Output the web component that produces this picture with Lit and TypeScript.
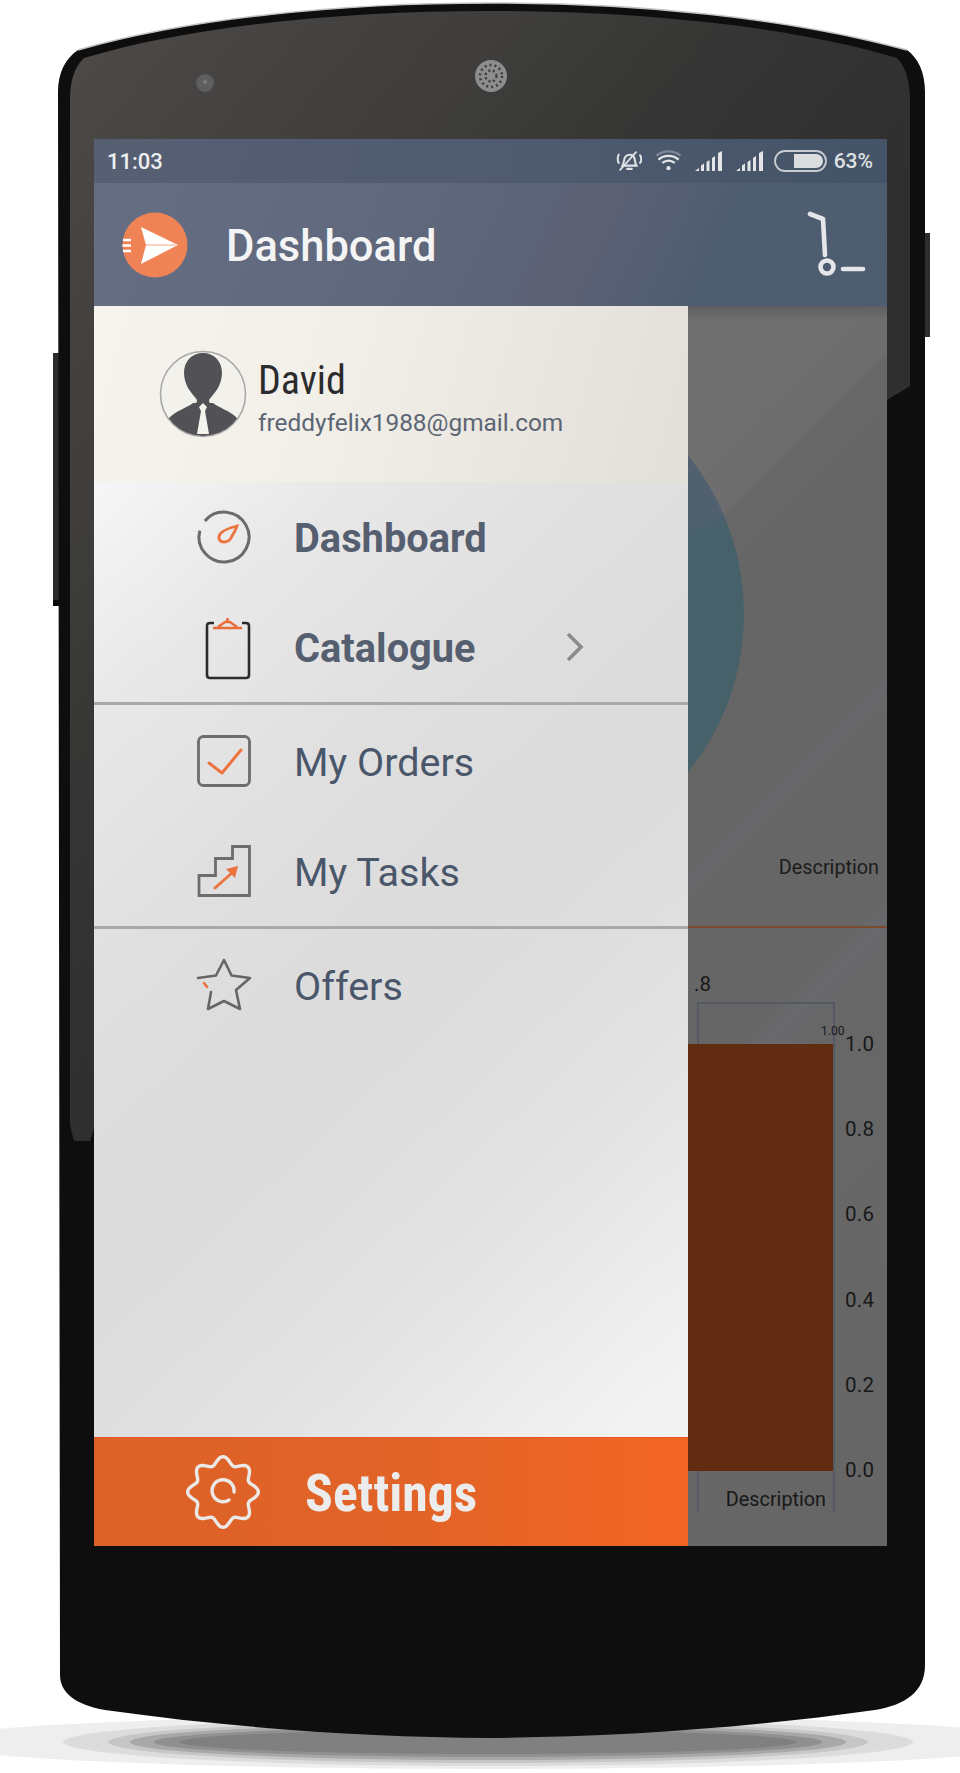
import { LitElement, html, css, svg } from "lit";
import { customElement } from "lit/decorators.js";

const gearPath = () => {
  const pts: string[] = [];
  const n = 160;
  for (let i = 0; i <= n; i++) {
    const t = (i / n) * Math.PI * 2;
    const r = 31.5 + 3.8 * Math.cos(8 * t);
    const x = 38 + r * Math.sin(t);
    const y = 38 - r * Math.cos(t);
    pts.push(`${i ? "L" : "M"}${x.toFixed(2)} ${y.toFixed(2)}`);
  }
  return pts.join("") + "Z";
};

@customElement("app-root")
export class AppRoot extends LitElement {
  static styles = css`
    :host { display: block; width: 960px; height: 1773px; font-family: Roboto, "Liberation Sans", sans-serif; }
    .stage { position: relative; width: 960px; height: 1773px; background: #fff; overflow: hidden; padding-top: 139px; box-sizing: border-box; }
    .device { position: absolute; left: 0; top: 0; width: 960px; height: 1773px; }
    .screen { position: relative; margin-left: 94px; width: 793px; height: 1407px; display: flex; flex-direction: column; overflow: hidden; }

    .status { height: 44px; flex: none; display: flex; align-items: center; padding: 0 14px 0 13px; color: #eceef0; font-size: 22px; font-weight: 500;
      background: linear-gradient(100deg, #575f73 0%, #505b70 50%, #445367 100%); }
    .time { flex: 1; }
    .status-icons { display: flex; align-items: center; }
    .status-icons svg { display: block; }
    .bell, .wifi { margin-right: 13px; }
    .sig1 { margin-right: 13px; display: block; }
    .sig2 { margin-right: 10px; display: block; }
    .pct { font-size: 21px; color: #dfe2e5; font-weight: 500; margin-left: 7px; }

    .appbar { height: 123px; flex: none; display: flex; align-items: center; padding: 0 18px 0 28px;
      background: linear-gradient(115deg, #656e83 0%, #5f687c 38%, #5c6174 62%, #4f5d70 76%, #4e5c6f 100%); }
    .appbar .title { flex: 1; margin-left: 38px; padding-top: 4px; color: #f4f4f4; font-size: 43.5px; font-weight: 500; line-height: 50px; }
    .appbar svg { display: block; }
    .cart { position: relative; top: 1px; }

    .body { position: relative; flex: 1; display: flex; flex-direction: column;
      background: linear-gradient(135deg, #717171 0%, #6e6e6e 41%, #676767 41.6%, #656565 57%, #67686b 57.6%, #666 59%, #666 68%, #68696c 69%, #676767 72%, #666 100%); }

    .pane-top { position: relative; height: 622px; flex: none; box-sizing: border-box; border-bottom: 2px solid #7d4a2e; display: flex; justify-content: flex-end; align-items: flex-end;
      padding: 0 8px 46px 0; color: #1c1c1c; font-size: 19.8px; overflow: hidden; }
    .pane-top::before { content: ""; position: absolute; left: 0; right: 0; top: 0; height: 14px; background: linear-gradient(#5e5f60, rgba(94,95,96,0)); }
    .pie { position: absolute; left: 146px; top: 56px; width: 504px; height: 504px; border-radius: 50%;
      background: linear-gradient(165deg, #4a6a72 0%, #4a6a72 24%, #50606f 34%, #50606f 44%, #47616a 46%, #47616a 100%); }
    .desc { position: relative; line-height: 24px; }

    .pane-bottom { position: relative; flex: 1; display: flex; padding-top: 74px; box-sizing: border-box; color: #181818; }
    .plot { width: 741px; height: 511px; flex: none; box-sizing: border-box; border-right: 2px solid #555a62; display: flex; flex-direction: column; }
    .plot-head { height: 42px; flex: none; box-sizing: border-box; border-top: 2px solid #555a62; margin-left: 603px; border-left: 2px solid #555a62; }
    .bar { height: 427px; flex: none; background: #622c12; }
    .plot-foot { flex: 1; margin-left: 603px; border-left: 2px solid #555a62; display: flex; justify-content: flex-end; align-items: center; padding: 14px 7px 0 0; font-size: 19.8px; }
    .axis { margin: 30px 0 0 10px; height: 450px; display: flex; flex-direction: column; justify-content: space-between; font-size: 20.5px; line-height: 24px; letter-spacing: .3px; }
    .tick { position: absolute; left: 600px; top: 44px; font-size: 20.5px; line-height: 24px; }
    .value { position: absolute; left: 727px; top: 96px; font-size: 12px; line-height: 14px; }

    .drawer { position: absolute; left: 0; top: 0; bottom: 0; width: 594px; display: flex; flex-direction: column; overflow: hidden;
      background: linear-gradient(137deg, #f9f9f9 0%, #f6f6f6 10%, #e8e8e8 23%, #e1e0e0 37%, #dddcdc 49%, #dedddd 60%, #e3e3e3 72%, #f2f2f2 90%, #f6f6f6 100%); }
    .header { height: 176px; flex: none; box-sizing: border-box; display: flex; align-items: flex-start; padding: 44px 0 0 65px;
      background: linear-gradient(105deg, #f6f4ee 0%, #f2efe8 40%, #e2dfd8 100%); }
    .header svg { display: block; flex: none; }
    .who { margin: 7px 0 0 11px; display: flex; flex-direction: column; }
    .name { font-size: 40px; line-height: 47px; color: #2b2b2e; font-stretch: 75%; }
    .mail { font-size: 24.4px; line-height: 31px; color: #5c6574; margin-top: 3px; }
    .group { flex: none; box-sizing: border-box; }
    .g1 { height: 223px; border-bottom: 3px solid #a9a9a9; }
    .g2 { height: 224px; border-bottom: 3px solid #a9a9a9; padding-top: 1px; }
    .g3 { padding-top: 1px; }
    .row { height: 110px; display: flex; align-items: center; }
    .icon { width: 56px; height: 66px; margin-left: 102px; flex: none; display: flex; align-items: center; justify-content: center; }
    .icon svg { display: block; overflow: visible; }
    .clip { margin-left: 8px; }
    .label { margin-left: 42px; padding-top: 3px; font-size: 39.5px; color: #4a566a; line-height: 46px; flex: 1; }
    .label.strong { font-weight: 700; color: #565f70; font-size: 39.8px; }
    .chev { display: block; margin-right: 104px; }
    .spacer { flex: 1; }
    .settings { height: 109px; flex: none; display: flex; align-items: center; border-top: 1px solid #e8562a; box-sizing: border-box; background: linear-gradient(90deg, #dc6228 0%, #e16328 50%, #f26523 100%); }
    .settings svg { display: block; margin-left: 91px; flex: none; }
    .settings span { margin-left: 44px; padding-top: 3px; color: #ececec; font-size: 51.7px; font-weight: 700; font-stretch: 75%; line-height: 58px; }
  `;

  private statusIcons() {
    const signal = svg`<svg width="28" height="20" viewBox="0 0 28 20" fill="#e3e5e8">
      <path d="M0 20 4 17V20zM6 20V14.500L9 12.500V20zM11.500 20V11L14.500 9V20zM17 20V7L20 5V20zM23 20V2L27 0V20z"/></svg>`;
    return html`<div class="status-icons">
      <svg class="bell" width="26" height="24" viewBox="0 0 28 24" fill="none" stroke="#dfe2e5" stroke-width="2.200">
        <path d="M7 17c2-3 1-7 3-9.500 2-2.500 7-3 9-.5 2 3 1 7 3 10H7zM12 20.500h5M3 5c-1.500 2-1.500 7 0 9M26 6c1.500 2 1.500 6 0 8" stroke-linecap="round"/>
        <path d="M4 22 22 2" stroke-width="2"/>
      </svg>
      <svg class="wifi" width="27" height="22" viewBox="0 0 28 22" fill="none" stroke="#e3e5e8" stroke-width="2.400">
        <path d="M1.500 5.500c7-6 18-6 25 0" stroke-opacity=".35"/><path d="M3.500 9.500c6-5 15-5 21 0"/><path d="M7.500 13c4-3 9-3 13 0"/>
        <circle cx="14" cy="18.500" r="2.200" fill="#e3e5e8" stroke="none"/>
      </svg>
      <span class="sig1">${signal}</span>
      <span class="sig2">${signal}</span>
      <svg width="53" height="22" viewBox="0 0 53 22" fill="none">
        <rect x="1" y="1" width="51" height="20" rx="10" stroke="#c9ccd1" stroke-width="1.800"/>
        <path d="M20 4h22a7 7 0 0 1 0 14H20z" fill="#dadcdf"/>
      </svg>
      <span class="pct">63%</span>
    </div>`;
  }

  private logo() {
    return html`<svg width="66" height="66" viewBox="0 0 66 66">
      <circle cx="33" cy="33" r="32.500" fill="#f08355"/>
      <path d="M19 15 56 33 19 52 24 33z" fill="#fff"/>
      <path d="M24 33H54" stroke="#f6b79d" stroke-width="1.200"/>
      <path d="M1 28h8M0.500 33.500h8.500M1 39h8" stroke="#fff" stroke-width="2.600"/>
    </svg>`;
  }

  private cart() {
    return html`<svg class="cart" width="62" height="70" viewBox="0 0 62 70" fill="none" stroke="#e4e6e9" stroke-width="4.600" stroke-linecap="round" stroke-linejoin="round">
      <path d="M3 3 16 8 18 44"/><circle cx="20" cy="56" r="6.500"/><path d="M36 58H56"/>
    </svg>`;
  }

  private avatar() {
    return html`<svg width="88" height="88" viewBox="0 0 88 88">
      <defs><clipPath id="av"><circle cx="44" cy="44" r="42"/></clipPath></defs>
      <circle cx="44" cy="44" r="42.500" fill="#f3f1ec" stroke="#a9a9a9" stroke-width="1.600"/>
      <g clip-path="url(#av)" fill="#525256">
        <path d="M44 3c11 0 19 8 19 20 0 6-2 11-4 15-3 5-7 9-9 12l1 5h-14l1-5c-2-3-6-7-9-12-2-4-4-9-4-15 0-12 8-20 19-20z"/>
        <path d="M10 88V68c8-8 18-10 24-15h20c6 5 16 7 24 15v20z"/>
      </g>
      <path d="M44 53l4 4-2 4 4 23H38l4-23-2-4z" fill="#f5f3ee"/>
    </svg>`;
  }

  private icoDashboard() {
    return html`<svg width="56" height="56" viewBox="0 0 56 56" fill="none">
      <path d="M8.850 11.930A25 25 0 1 1 3.850 21.530" stroke="#6b6b6b" stroke-width="3"/>
      <path d="M41 17C37 18 29 20 25 24 21 28 23 33 28 33 32 33 35 30 36 27 38 24 40 20 41 17Z" stroke="#ec7440" stroke-width="2.800"/>
    </svg>`;
  }
  private icoCatalogue() {
    return html`<svg class="clip" width="46" height="65" viewBox="0 0 46 65" fill="none">
      <path d="M9 8H5Q2 8 2 11V60Q2 63 5 63H41Q44 63 44 60V11Q44 8 41 8H37" stroke="#2c2c2e" stroke-width="2.600"/>
      <path d="M8 13H37M13 12 20 7H25L32 12M22.500 3V6" stroke="#ea6c38" stroke-width="2.600"/>
    </svg>`;
  }
  private icoOrders() {
    return html`<svg width="54" height="52" viewBox="0 0 54 52" fill="none">
      <rect x="1.500" y="1.500" width="51" height="49" rx="5" stroke="#6d6d6d" stroke-width="2.800"/>
      <path d="M12 28 25 38 44 15" stroke="#ec7440" stroke-width="3" stroke-linecap="round" stroke-linejoin="round"/>
    </svg>`;
  }
  private icoTasks() {
    return html`<svg width="54" height="52" viewBox="0 0 54 52" fill="none">
      <path d="M2 50.500H52.500V1.500H35.500V13.500H18.500V30.500H2z" stroke="#6d6d6d" stroke-width="2.800"/>
      <path d="M18 43 36 27" stroke="#ec7440" stroke-width="3" stroke-linecap="round"/>
      <path d="M41 21 29 24 38 33z" fill="#ec7440"/>
    </svg>`;
  }
  private icoOffers() {
    return html`<svg width="54" height="54" viewBox="0 0 54 54" fill="none" stroke="#666" stroke-width="2.600" stroke-linejoin="round" stroke-linecap="round">
      <path d="M14 34 11 51 27 43 43 51 39 32 53 20 34.500 17.500 27 2 19 17.500 1 20"/>
      <path d="M7 25 10 29" stroke="#ec7440"/>
    </svg>`;
  }

  private row(icon: unknown, text: string, strong = false, chev = false) {
    return html`<div class="row">
      <div class="icon">${icon}</div>
      <div class="label ${strong ? "strong" : ""}">${text}</div>
      ${chev ? html`<svg class="chev" width="18" height="30" viewBox="0 0 18 30" fill="none"><path d="M2 2 15 15 2 28" stroke="#8b8b8b" stroke-width="3.600"/></svg>` : ""}
    </div>`;
  }

  render() {
    return html`<div class="stage">
      <svg class="device" viewBox="0 0 960 1773">
        <defs>
          <linearGradient id="bez" gradientUnits="userSpaceOnUse" x1="100" y1="50" x2="850" y2="700"><stop offset="0" stop-color="#4b4846"/><stop offset=".31" stop-color="#3e3d3c"/><stop offset=".45" stop-color="#363635"/><stop offset=".7" stop-color="#2f2f2f"/></linearGradient>
        </defs>
        <ellipse cx="488" cy="1742" rx="560" ry="27" fill="#eee"/>
        <ellipse cx="488" cy="1742" rx="425" ry="24" fill="#dcdcdc"/>
        <ellipse cx="488" cy="1742" rx="380" ry="21" fill="#c6c6c6"/>
        <ellipse cx="488" cy="1742" rx="358" ry="18" fill="#a8a8a8"/>
        <ellipse cx="488" cy="1742" rx="334" ry="15" fill="#909090"/>
        <ellipse cx="488" cy="1742" rx="309" ry="12" fill="#808080"/>
        <rect x="53" y="353" width="8" height="253" fill="#2b2b2b"/>
        <rect x="53" y="600" width="8" height="6" fill="#0a0a0a"/>
        <rect x="921" y="233" width="9" height="104" fill="#2e2e2e"/>
        <path d="M58 92C58 72 66 58 78 50 190 18 340 3 490 3 640 3 790 18 907 50 918 58 925 72 925 92V1665C925 1692 905 1705 875 1710 740 1729 610 1737 490 1738 370 1737 240 1729 105 1710 75 1705 60 1692 60 1675Z" fill="#0e0e0e"/>
        <path d="M78 50C190 18 340 3 490 3 640 3 790 18 907 50" fill="none" stroke="#c4c4c4" stroke-width="1.500"/>
        <path d="M70 100C70 80 75 66 84 58 190 26 340 11 490 11 640 11 790 26 897 58 905 66 910 80 910 100V386L887 400 94 1100V1128L90 1141H74L70 1125Z" fill="url(#bez)"/>
        <circle cx="205" cy="83" r="9" fill="#5e5e5e"/><circle cx="205" cy="82" r="2" fill="#7b7b7b"/>
        <circle cx="491" cy="76" r="16" fill="#8d8d8d"/>
        <circle cx="491" cy="76" r="11" fill="none" stroke="#3d3d3d" stroke-width="2.500" stroke-dasharray="2 3"/>
        <circle cx="491" cy="76" r="5.500" fill="none" stroke="#3d3d3d" stroke-width="2.500" stroke-dasharray="2 2.500"/>
      </svg>
      <div class="screen">
        <div class="status"><span class="time">11:03</span>${this.statusIcons()}</div>
        <div class="appbar">${this.logo()}<span class="title">Dashboard</span>${this.cart()}</div>
        <div class="body">
          <div class="pane-top"><div class="pie"></div><span class="desc">Description</span></div>
          <div class="pane-bottom">
            <span class="tick">.8</span>
            <span class="value">1.00</span>
            <div class="plot">
              <div class="plot-head"></div>
              <div class="bar"></div>
              <div class="plot-foot">Description</div>
            </div>
            <div class="axis"><span>1.0</span><span>0.8</span><span>0.6</span><span>0.4</span><span>0.2</span><span>0.0</span></div>
          </div>
          <nav class="drawer">
            <div class="header">${this.avatar()}
              <div class="who"><span class="name">David</span><span class="mail">freddyfelix1988@gmail.com</span></div>
            </div>
            <div class="group g1">
              ${this.row(this.icoDashboard(), "Dashboard", true)}
              ${this.row(this.icoCatalogue(), "Catalogue", true, true)}
            </div>
            <div class="group g2">
              ${this.row(this.icoOrders(), "My Orders")}
              ${this.row(this.icoTasks(), "My Tasks")}
            </div>
            <div class="group g3">
              ${this.row(this.icoOffers(), "Offers")}
            </div>
            <div class="spacer"></div>
            <div class="settings">
              <svg width="76" height="76" viewBox="0 0 76 76" fill="none" stroke="#ebe9e7" stroke-width="3.400">
                <path d="${gearPath()}"/>
                <path d="M44 46A11 11 0 1 1 49 38" stroke-linecap="round"/>
              </svg>
              <span>Settings</span>
            </div>
          </nav>
        </div>
      </div>
    </div>`;
  }
}
